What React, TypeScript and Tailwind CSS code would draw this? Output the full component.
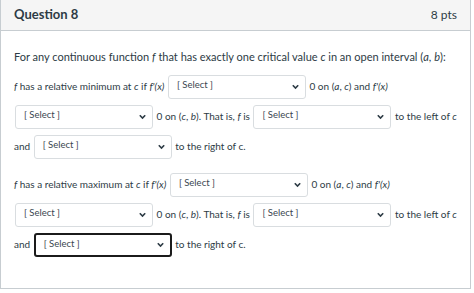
import React from "react";

// Dropdown placeholder that looks like the quiz's select boxes
function Dropdown({ focused = false }: { focused?: boolean }) {
  return (
    <span
      className={`relative mx-[1px] inline-block h-[24px] w-[138px] align-middle rounded-[3px] bg-white ${
        focused ? "border-2 border-[#1b1b1b]" : "border border-[#d9dde0]"
      }`}
    >
      <span className="absolute left-[8px] top-[3px] text-[9.5px] leading-[12px] text-[#3a4650] not-italic">
        [ Select ]
      </span>
      <svg
        className="absolute right-[6px] top-1/2 -translate-y-1/2"
        width="7"
        height="5"
        viewBox="0 0 7 5"
      >
        <path d="M0.8 0.8 L3.5 3.6 L6.2 0.8" fill="none" stroke="#2d3b45" strokeWidth="1.6" />
      </svg>
    </span>
  );
}

const I = ({ children }: { children: React.ReactNode }) => <i className="italic">{children}</i>;

function Row({ children }: { children: React.ReactNode }) {
  return <div className="h-[30px] leading-[30px] whitespace-nowrap">{children}</div>;
}

export default function App() {
  return (
    <div
      className="w-[474px] h-[293px] bg-white text-[#2d3b45]"
      style={{ fontFamily: "Lato, 'Noto Sans', sans-serif" }}
    >
      <div className="w-[471px] h-[289px] border border-[#c7cdd1] border-t-0">
        {/* Header */}
        <div className="h-[31px] flex items-center justify-between px-[13px] bg-[#f5f5f5] border-b border-[#c7cdd1]">
          <span className="font-bold text-[13px]">Question 8</span>
          <span className="text-[12px]">8 pts</span>
        </div>

        {/* Body */}
        <div className="px-[13px] pt-[18px] text-[10px]">
          <p className="leading-[16px] whitespace-nowrap text-[11px]">
            For any continuous function <I>f</I> that has exactly one critical value <I>c</I> in an open interval (<I>a</I>, <I>b</I>):
          </p>

          <div className="mt-[6px]">
            <Row>
              <I>f</I> has a relative minimum at <I>c</I> if <I>f'(x)</I>{" "}
              <Dropdown /> 0 on (<I>a</I>, <I>c</I>) and <I>f'(x)</I>
            </Row>
            <Row>
              <Dropdown /> 0 on (<I>c</I>, <I>b</I>). That is, <I>f</I> is <Dropdown /> to the left of <I>c</I>
            </Row>
            <Row>
              and <Dropdown /> to the right of c.
            </Row>
          </div>

          <div className="mt-[8px]">
            <Row>
              <I>f</I> has a relative maximum at <I>c</I> if <I>f'(x)</I>{" "}
              <Dropdown /> 0 on (<I>a</I>, <I>c</I>) and <I>f'(x)</I>
            </Row>
            <Row>
              <Dropdown /> 0 on (<I>c</I>, <I>b</I>). That is, <I>f</I> is <Dropdown /> to the left of <I>c</I>
            </Row>
            <Row>
              and <Dropdown focused /> to the right of c.
            </Row>
          </div>
        </div>
      </div>
    </div>
  );
}
